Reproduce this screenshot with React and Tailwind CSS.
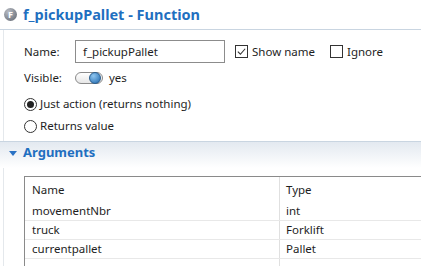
const ARGS = [
  { name: 'movementNbr', type: 'int' },
  { name: 'truck', type: 'Forklift' },
  { name: 'currentpallet', type: 'Pallet' },
];

function Checkbox({ checked, label }) {
  return (
    <label className="flex items-center gap-[4px]">
      <span className="flex h-[13px] w-[13px] items-center justify-center border border-[#333] bg-white">
        {checked && (
          <svg viewBox="0 0 12 12" className="h-[11px] w-[11px]">
            <path d="M2 6.2 L4.8 9 L10 3" fill="none" stroke="#333" strokeWidth="1.2" />
          </svg>
        )}
      </span>
      <span>{label}</span>
    </label>
  );
}

function Radio({ checked, label }) {
  return (
    <label className="flex items-center gap-[3px]">
      <span className="flex h-[13px] w-[13px] items-center justify-center rounded-full border border-[#333] bg-white">
        {checked && <span className="h-[7px] w-[7px] rounded-full bg-[#222]" />}
      </span>
      <span>{label}</span>
    </label>
  );
}

export default function App() {
  return (
    <div className="h-[266px] w-[421px] overflow-hidden bg-white text-[11.5px] text-[#1e1e1e] [font-family:'Noto_Sans',sans-serif]">
      <div className="flex h-[30px] items-center gap-[6px] border-b border-[#c9d5e1] pl-[4px]">
        <span className="flex h-[13px] w-[13px] items-center justify-center rounded-full bg-[radial-gradient(circle_at_35%_30%,#b8bcc4,#5d636d)] text-[9px] font-bold leading-none text-white">
          F
        </span>
        <span className="text-[14.5px] font-bold text-[#1f6fc0]">f_pickupPallet - Function</span>
      </div>

      <div className="ml-[3px] border-l border-[#e4e8ec] pl-[20px] pt-[10px]">
        <div className="flex h-[23px] items-center">
          <span className="w-[51px]">Name:</span>
          <div className="flex h-[23px] w-[150px] items-center border border-[#8c8c8c] px-[7px]">f_pickupPallet</div>
          <div className="ml-[10px] flex items-center gap-[15px]">
            <Checkbox checked label="Show name" />
            <Checkbox label="Ignore" />
          </div>
        </div>

        <div className="mt-[5px] flex h-[20px] items-center">
          <span className="w-[51px]">Visible:</span>
          <span className="flex h-[12px] w-[28px] items-center justify-end rounded-full border border-[#8a8a8a] bg-[linear-gradient(#ffffff,#e6e6e6)] pr-[1px]">
            <span className="h-[12px] w-[12px] rounded-full border border-[#2a5e8e] bg-[radial-gradient(circle_at_35%_30%,#8fc6f0,#1f68ad)]" />
          </span>
          <span className="ml-[6px]">yes</span>
        </div>

        <div className="mt-[5px] flex h-[22px] items-center">
          <Radio checked label="Just action (returns nothing)" />
        </div>
        <div className="flex h-[22px] items-center">
          <Radio label="Returns value" />
        </div>
        <div className="h-[4px]" />
      </div>

      <div className="flex h-[27px] items-center gap-[6px] border-t border-[#c9d5e1] bg-[linear-gradient(#e3e9f0,#ffffff)] pb-[4px] pl-[9px]">
        <svg viewBox="0 0 8 5" className="h-[5px] w-[8px]">
          <path d="M0 0 H8 L4 5 Z" fill="#2a72c4" />
        </svg>
        <span className="text-[13px] font-bold text-[#1f6fc0]">Arguments</span>
      </div>

      <div className="ml-[3px] border-l border-[#e4e8ec] pl-[20px] pt-[8px]">
        <div className="border-l border-t border-[#8a8a8a]">
          <div className="grid h-[25px] grid-cols-[254px_1fr] items-center">
            <span className="pl-[7px]">Name</span>
            <span className="flex h-full items-center border-l border-[#e0e0e0] pl-[6px]">Type</span>
          </div>
          {ARGS.map((a) => (
            <div key={a.name} className="grid h-[19px] grid-cols-[254px_1fr] items-center border-b border-[#e8e8e8]">
              <span className="pl-[7px]">{a.name}</span>
              <span className="flex h-full items-center border-l border-[#e0e0e0] pl-[6px]">{a.type}</span>
            </div>
          ))}
          <div className="grid h-[10px] grid-cols-[254px_1fr]">
            <span />
            <span className="border-l border-[#e0e0e0]" />
          </div>
        </div>
      </div>
    </div>
  );
}
